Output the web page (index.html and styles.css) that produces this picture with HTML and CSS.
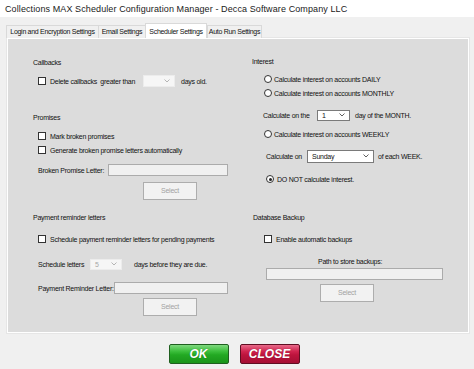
FILE: index.html
```html
<!DOCTYPE html>
<html>
<head>
<meta charset="utf-8">
<link rel="stylesheet" href="styles.css">
</head>
<body>
<div class="window">
  <div class="titlebar">Collections MAX Scheduler Configuration Manager - Decca Software Company LLC</div>
  <div class="tabs">
    <div class="tab t-login">Login and Encryption Settings</div>
    <div class="tab t-email">Email Settings</div>
    <div class="tab active t-sched">Scheduler Settings</div>
    <div class="tab t-auto">Auto Run Settings</div>
  </div>
  <div class="page">
    <div class="sec">
      <div class="hdr mt19">Callbacks</div>
      <div class="row mt6 ind5">
        <span class="lbl w-delete"><span class="cb"></span><span class="cbtext">Delete callbacks&nbsp; greater than</span></span>
        <span class="dd dis w32"><span class="ddv"></span><svg class="chev" viewBox="0 0 6 4"><polyline points="0.5,0.5 3,3 5.5,0.5"/></svg></span>
        <span class="after6">days old.</span>
      </div>
      <div class="hdr mt25">Promises</div>
      <div class="row mt6 ind5"><span class="cb"></span><span class="cbtext">Mark broken promises</span></div>
      <div class="row ind5"><span class="cb"></span><span class="cbtext">Generate broken promise letters automatically</span></div>
      <div class="row mt6 ind5">
        <span class="lbl w-bpl">Broken Promise Letter:</span>
        <span class="tb w120"></span>
      </div>
      <div class="btn sel mt5 ml110">Select</div>
    </div>
    <div class="sec right">
      <div class="hdr mt18">Interest</div>
      <div class="row mt5 ind12"><span class="rb"></span><span class="rbtext">Calculate interest on accounts DAILY</span></div>
      <div class="row ind12"><span class="rb"></span><span class="rbtext">Calculate interest on accounts MONTHLY</span></div>
      <div class="row mt8 ind11">
        <span class="lbl w-calcthe">Calculate on the</span>
        <span class="dd w33"><span class="ddv">1</span><svg class="chev" viewBox="0 0 6 4"><polyline points="0.5,0.5 3,3 5.5,0.5"/></svg></span>
        <span class="after5">day of the MONTH.</span>
      </div>
      <div class="row mt5 ind12"><span class="rb"></span><span class="rbtext">Calculate interest on accounts WEEKLY</span></div>
      <div class="row mt8 ind14">
        <span class="lbl w-calcon">Calculate on</span>
        <span class="dd w67 h13"><span class="ddv">Sunday</span><svg class="chev" viewBox="0 0 6 4"><polyline points="0.5,0.5 3,3 5.5,0.5"/></svg></span>
        <span class="after4">of each WEEK.</span>
      </div>
      <div class="row mt9 ind14"><span class="rb on"></span><span class="rbtext wide">DO NOT calculate interest.</span></div>
    </div>
    <div class="sec">
      <div class="hdr">Payment reminder letters</div>
      <div class="row mt9 ind5"><span class="cb"></span><span class="cbtext">Schedule payment reminder letters for pending payments</span></div>
      <div class="row mt11 ind5">
        <span class="lbl w-sched">Schedule letters</span>
        <span class="dd dis w32 h11"><span class="ddv">5</span><svg class="chev" viewBox="0 0 6 4"><polyline points="0.5,0.5 3,3 5.5,0.5"/></svg></span>
        <span class="after12">days before they are due.</span>
      </div>
      <div class="row mt10 ind5">
        <span class="lbl w-prl">Payment Reminder Letter:</span>
        <span class="tb w114"></span>
      </div>
      <div class="btn sel mt3 ml110">Select</div>
    </div>
    <div class="sec right">
      <div class="hdr ind1">Database Backup</div>
      <div class="row mt9 ind12"><span class="cb"></span><span class="cbtext">Enable automatic backups</span></div>
      <div class="path mt11">Path to store backups:</div>
      <div class="tb w177 mt1 ml14"></div>
      <div class="btn sel mt4 ml68">Select</div>
    </div>
  </div>
  <div class="actions">
    <div class="big ok">OK</div>
    <div class="big close">CLOSE</div>
  </div>
</div>
</body>
</html>
```
FILE: styles.css
```css
* { box-sizing: border-box; }
html, body { margin: 0; padding: 0; }
body {
  font-family: "Liberation Sans", Arial, sans-serif;
  font-size: 7px;
  letter-spacing: -0.25px;
  color: #111;
  background: #f0f0f0;
}
.window {
  width: 474px;
  height: 369px;
  background: #f0f0f0;
  overflow: hidden;
}
.titlebar {
  height: 17px;
  line-height: 18px;
  background: #fff;
  padding-left: 5px;
  font-size: 9px;
  letter-spacing: 0.1px;
  color: #1a1a1a;
}
.tabs {
  display: flex;
  align-items: flex-end;
  height: 21px;
  padding-left: 6px;
}
.tab {
  height: 13px;
  line-height: 12px;
  border: 1px solid #d9d9d9;
  border-bottom: none;
  border-right: none;
  background: #f0f0f0;
  text-align: center;
  white-space: nowrap;
  letter-spacing: -0.3px;
}
.tab.active {
  height: 15px;
  line-height: 15px;
  background: #fff;
  border-right: 1px solid #d9d9d9;
}
.tab.t-auto { border-right: 1px solid #d9d9d9; }
.t-login { width: 92px; }
.t-email { width: 47px; }
.t-sched { width: 62px; }
.t-auto { width: 55px; }

.page {
  margin: 0 5px 0 7px;
  height: 295px;
  background: #dcdcdc;
  border: 1px solid #fff;
  box-shadow: 0 0 0 1px #e6e6e6;
  display: grid;
  grid-template-columns: 219px 1fr;
  grid-template-rows: 174px auto;
  padding-left: 25px;
}
.sec { display: flex; flex-direction: column; align-items: flex-start; }
.hdr { height: 10px; line-height: 10px; white-space: nowrap; }
.row {
  height: 14px;
  display: flex;
  align-items: center;
  white-space: nowrap;
}
.lbl { display: flex; align-items: center; flex: none; white-space: nowrap; }
.cb {
  width: 8px; height: 8px;
  border: 1px solid #333;
  background: #fff;
  flex: none;
}
.cbtext { margin-left: 4px; }
.rb {
  width: 8px; height: 8px;
  border: 1px solid #333;
  border-radius: 50%;
  background: #fff;
  flex: none;
  position: relative;
}
.rb.on::after {
  content: "";
  position: absolute;
  left: 1.5px; top: 1.5px;
  width: 3px; height: 3px;
  border-radius: 50%;
  background: #222;
}
.rbtext { margin-left: 2px; }
.rbtext.wide { margin-left: 3px; }

.dd {
  position: relative;
  height: 12px;
  background: #fff;
  border: 1px solid #7a7a7a;
  flex: none;
  display: flex;
  align-items: center;
}
.dd.dis { background: #f6f6f6; border-color: #ececec; color: #a6a6a6; }
.ddv { padding-left: 4px; }
.chev {
  position: absolute;
  right: 4px; top: 50%;
  width: 6px; height: 4px;
  margin-top: -2px;
  fill: none;
  stroke: #606060;
  stroke-width: 1;
}
.dd.dis .chev { stroke: #b5b5b5; }
.tb {
  height: 12px;
  background: #f0f0f0;
  border: 1px solid #ababab;
  flex: none;
}
.btn {
  width: 54px;
  height: 18px;
  line-height: 16px;
  text-align: center;
  background: #f2f2f2;
  border: 1px solid #adadad;
  color: #a2a2a2;
}
.path { margin-left: 66px; height: 10px; line-height: 10px; white-space: nowrap; }

.w-delete { width: 105px; }
.w-bpl { width: 70px; }
.w-sched { width: 52px; }
.w-prl { width: 76px; }
.w-calcthe { width: 54px; }
.w-calcon { width: 41px; }
.w32 { width: 32px; }
.w33 { width: 33px; height: 11px; }
.w67 { width: 67px; }
.h13 { height: 13px; }
.h11 { height: 11px; }
.w120 { width: 120px; }
.w114 { width: 114px; }
.w177 { width: 177px; }
.after4 { margin-left: 4px; }
.after5 { margin-left: 5px; }
.after6 { margin-left: 6px; }
.after12 { margin-left: 12px; }

.ind1 { margin-left: 1px; }
.ind5 { padding-left: 5px; }
.ind11 { padding-left: 11px; }
.ind12 { padding-left: 12px; }
.ind14 { padding-left: 14px; }
.ml14 { margin-left: 14px; }
.ml68 { margin-left: 68px; }
.ml110 { margin-left: 110px; }
.mt1 { margin-top: 1px; }
.mt3 { margin-top: 3px; }
.mt4 { margin-top: 4px; }
.mt5 { margin-top: 5px; }
.mt6 { margin-top: 6px; }
.mt8 { margin-top: 8px; }
.mt9 { margin-top: 9px; }
.mt10 { margin-top: 10px; }
.mt11 { margin-top: 11px; }
.mt18 { margin-top: 18px; }
.mt19 { margin-top: 19px; }
.mt25 { margin-top: 25px; }

.actions {
  display: flex;
  justify-content: center;
  gap: 11px;
  margin-top: 11px;
  padding-right: 6px;
}
.big {
  width: 60px;
  height: 20px;
  line-height: 19px;
  text-align: center;
  font-family: "Liberation Sans", Arial, sans-serif;
  font-weight: bold;
  font-style: italic;
  font-size: 12px;
  letter-spacing: 0;
  color: #fff;
  border-radius: 2px;
  text-shadow: 0 0 1px rgba(0,0,0,0.35);
}
.ok {
  background: linear-gradient(#7fd87f 0%, #3cbf3c 35%, #23a923 55%, #1a941a 100%);
  border: 1px solid #1f5f1f;
}
.close {
  background: linear-gradient(#e86a8a 0%, #d0244f 35%, #bd143d 55%, #a50f34 100%);
  border: 1px solid #5f0e22;
}
```
